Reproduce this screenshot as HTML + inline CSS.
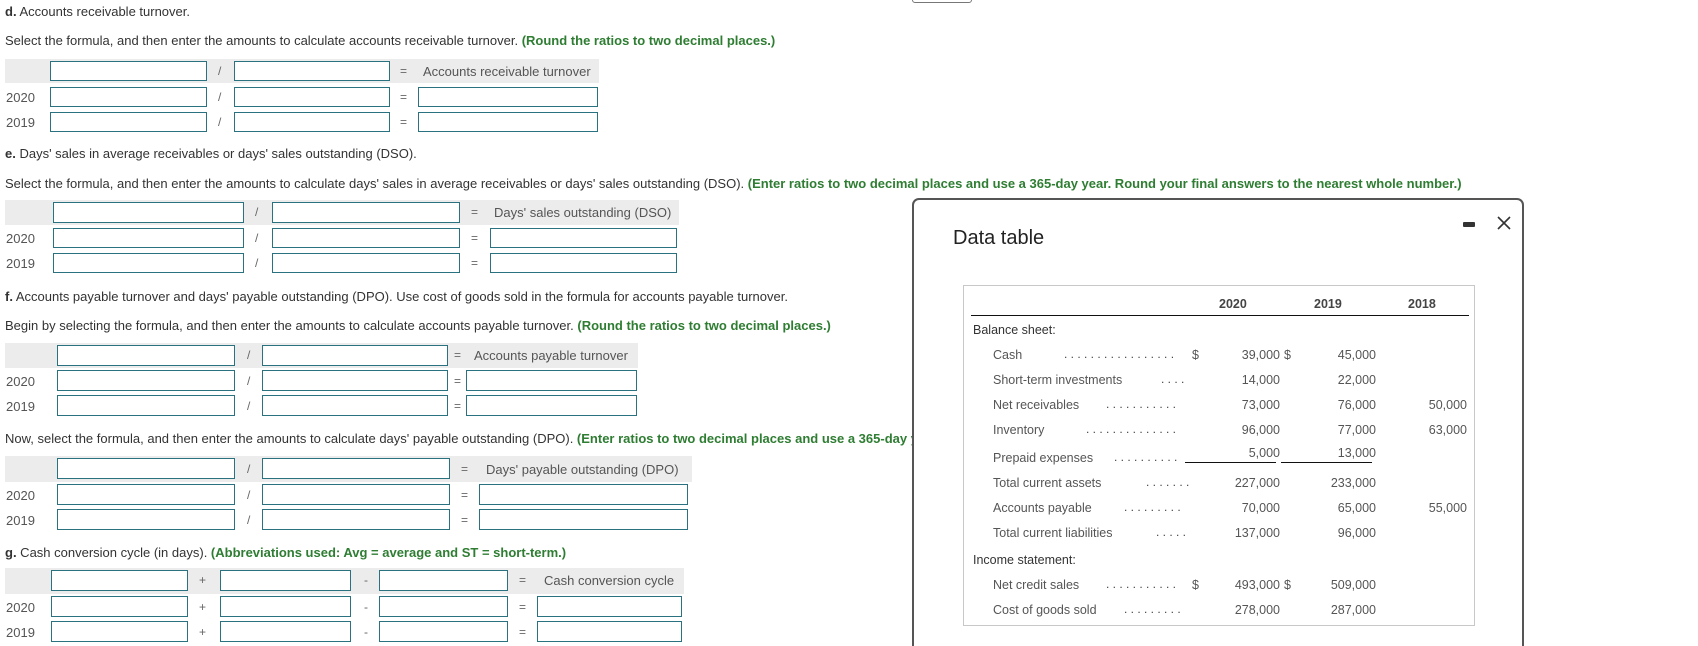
<!DOCTYPE html>
<html style="width:1698px;height:646px;overflow:hidden"><head><meta charset="utf-8"><style>
*{margin:0;padding:0;box-sizing:border-box}
body{width:1698px;height:646px;overflow:hidden;background:#fff;font-family:"Liberation Sans",Arial,sans-serif;font-size:13px;color:#333;position:relative}
.a{position:absolute;white-space:nowrap}
.g{color:#2e7d32;font-weight:bold}
.hd{position:absolute;background:#ececec}
.in{position:absolute;border:1px solid #2b7280;background:#fff}
.op{position:absolute;color:#666;font-size:12px}
.yr{position:absolute;color:#555;font-size:13px}
.lb{position:absolute;color:#555;font-size:13px;white-space:nowrap}
.dt{position:absolute;color:#444;font-size:12px}
.t{position:absolute;color:#555;font-size:12.5px;white-space:nowrap}
.r{text-align:right}
</style></head><body>
<div class="a" style="left:912px;top:-6px;width:60px;height:9px;border:1px solid #777;border-radius:3px"></div>

<div class="a" style="left:5px;top:4px"><b>d.</b> Accounts receivable turnover.</div>
<div class="a" style="left:5px;top:33px">Select the formula, and then enter the amounts to calculate accounts receivable turnover. <span class="g">(Round the ratios to two decimal places.)</span></div>
<div class="hd" style="left:5px;top:59px;width:594px;height:24px"></div>
<div class="in" style="left:50px;top:61px;width:157px;height:20px"></div><div class="op" style="left:218px;top:64px">/</div>
<div class="in" style="left:234px;top:61px;width:156px;height:20px"></div><div class="op" style="left:400px;top:64px">=</div>
<div class="lb" style="left:423px;top:64px">Accounts receivable turnover</div>
<div class="yr" style="left:6px;top:90px">2020</div>
<div class="in" style="left:50px;top:87px;width:157px;height:20px"></div><div class="op" style="left:218px;top:90px">/</div>
<div class="in" style="left:234px;top:87px;width:156px;height:20px"></div><div class="op" style="left:400px;top:90px">=</div>
<div class="in" style="left:418px;top:87px;width:180px;height:20px"></div>
<div class="yr" style="left:6px;top:115px">2019</div>
<div class="in" style="left:50px;top:112px;width:157px;height:20px"></div><div class="op" style="left:218px;top:115px">/</div>
<div class="in" style="left:234px;top:112px;width:156px;height:20px"></div><div class="op" style="left:400px;top:115px">=</div>
<div class="in" style="left:418px;top:112px;width:180px;height:20px"></div>

<div class="a" style="left:5px;top:146px"><b>e.</b> Days' sales in average receivables or days' sales outstanding (DSO).</div>
<div class="a" style="left:5px;top:176px">Select the formula, and then enter the amounts to calculate days' sales in average receivables or days' sales outstanding (DSO). <span class="g">(Enter ratios to two decimal places and use a 365-day year. Round your final answers to the nearest whole number.)</span></div>
<div class="hd" style="left:5px;top:200px;width:674px;height:25px"></div>
<div class="in" style="left:53px;top:202px;width:191px;height:21px"></div><div class="op" style="left:255px;top:205px">/</div>
<div class="in" style="left:272px;top:202px;width:188px;height:21px"></div><div class="op" style="left:471px;top:205px">=</div>
<div class="lb" style="left:494px;top:205px">Days' sales outstanding (DSO)</div>
<div class="yr" style="left:6px;top:231px">2020</div>
<div class="in" style="left:53px;top:228px;width:191px;height:20px"></div><div class="op" style="left:255px;top:231px">/</div>
<div class="in" style="left:272px;top:228px;width:188px;height:20px"></div><div class="op" style="left:471px;top:231px">=</div>
<div class="in" style="left:490px;top:228px;width:187px;height:20px"></div>
<div class="yr" style="left:6px;top:256px">2019</div>
<div class="in" style="left:53px;top:253px;width:191px;height:20px"></div><div class="op" style="left:255px;top:256px">/</div>
<div class="in" style="left:272px;top:253px;width:188px;height:20px"></div><div class="op" style="left:471px;top:256px">=</div>
<div class="in" style="left:490px;top:253px;width:187px;height:20px"></div>

<div class="a" style="left:5px;top:289px"><b>f.</b> Accounts payable turnover and days' payable outstanding (DPO). Use cost of goods sold in the formula for accounts payable turnover.</div>
<div class="a" style="left:5px;top:318px">Begin by selecting the formula, and then enter the amounts to calculate accounts payable turnover. <span class="g">(Round the ratios to two decimal places.)</span></div>
<div class="hd" style="left:5px;top:343px;width:633px;height:25px"></div>
<div class="in" style="left:57px;top:345px;width:178px;height:21px"></div><div class="op" style="left:247px;top:348px">/</div>
<div class="in" style="left:262px;top:345px;width:186px;height:21px"></div><div class="op" style="left:454px;top:348px">=</div>
<div class="lb" style="left:474px;top:348px">Accounts payable turnover</div>
<div class="yr" style="left:6px;top:374px">2020</div>
<div class="in" style="left:57px;top:370px;width:178px;height:21px"></div><div class="op" style="left:247px;top:374px">/</div>
<div class="in" style="left:262px;top:370px;width:186px;height:21px"></div><div class="op" style="left:454px;top:374px">=</div>
<div class="in" style="left:466px;top:370px;width:171px;height:21px"></div>
<div class="yr" style="left:6px;top:399px">2019</div>
<div class="in" style="left:57px;top:395px;width:178px;height:21px"></div><div class="op" style="left:247px;top:399px">/</div>
<div class="in" style="left:262px;top:395px;width:186px;height:21px"></div><div class="op" style="left:454px;top:399px">=</div>
<div class="in" style="left:466px;top:395px;width:171px;height:21px"></div>

<div class="a" style="left:5px;top:431px">Now, select the formula, and then enter the amounts to calculate days' payable outstanding (DPO). <span class="g">(Enter ratios to two decimal places and use a 365-day year. Round your final answers to the nearest whole number.)</span></div>
<div class="hd" style="left:5px;top:456px;width:687px;height:26px"></div>
<div class="in" style="left:57px;top:458px;width:178px;height:21px"></div><div class="op" style="left:247px;top:462px">/</div>
<div class="in" style="left:262px;top:458px;width:188px;height:21px"></div><div class="op" style="left:461px;top:462px">=</div>
<div class="lb" style="left:486px;top:462px">Days' payable outstanding (DPO)</div>
<div class="yr" style="left:6px;top:488px">2020</div>
<div class="in" style="left:57px;top:484px;width:178px;height:21px"></div><div class="op" style="left:247px;top:488px">/</div>
<div class="in" style="left:262px;top:484px;width:188px;height:21px"></div><div class="op" style="left:461px;top:488px">=</div>
<div class="in" style="left:479px;top:484px;width:209px;height:21px"></div>
<div class="yr" style="left:6px;top:513px">2019</div>
<div class="in" style="left:57px;top:509px;width:178px;height:21px"></div><div class="op" style="left:247px;top:513px">/</div>
<div class="in" style="left:262px;top:509px;width:188px;height:21px"></div><div class="op" style="left:461px;top:513px">=</div>
<div class="in" style="left:479px;top:509px;width:209px;height:21px"></div>

<div class="a" style="left:5px;top:545px"><b>g.</b> Cash conversion cycle (in days). <span class="g">(Abbreviations used: Avg = average and ST = short-term.)</span></div>
<div class="hd" style="left:5px;top:568px;width:679px;height:26px"></div>
<div class="in" style="left:51px;top:570px;width:137px;height:21px"></div><div class="op" style="left:199px;top:573px">+</div>
<div class="in" style="left:220px;top:570px;width:131px;height:21px"></div><div class="op" style="left:364px;top:573px">-</div>
<div class="in" style="left:379px;top:570px;width:129px;height:21px"></div><div class="op" style="left:519px;top:573px">=</div>
<div class="lb" style="left:544px;top:573px">Cash conversion cycle</div>
<div class="yr" style="left:6px;top:600px">2020</div>
<div class="in" style="left:51px;top:596px;width:137px;height:21px"></div><div class="op" style="left:199px;top:600px">+</div>
<div class="in" style="left:220px;top:596px;width:131px;height:21px"></div><div class="op" style="left:364px;top:600px">-</div>
<div class="in" style="left:379px;top:596px;width:129px;height:21px"></div><div class="op" style="left:519px;top:600px">=</div>
<div class="in" style="left:537px;top:596px;width:145px;height:21px"></div>
<div class="yr" style="left:6px;top:625px">2019</div>
<div class="in" style="left:51px;top:621px;width:137px;height:21px"></div><div class="op" style="left:199px;top:625px">+</div>
<div class="in" style="left:220px;top:621px;width:131px;height:21px"></div><div class="op" style="left:364px;top:625px">-</div>
<div class="in" style="left:379px;top:621px;width:129px;height:21px"></div><div class="op" style="left:519px;top:625px">=</div>
<div class="in" style="left:537px;top:621px;width:145px;height:21px"></div>

<!-- dialog -->
<div class="a" style="left:-4px;top:0;width:1698px;height:646px;overflow:hidden">
<div class="a" style="left:916px;top:198px;width:612px;height:448px;border:2px solid #555;border-bottom:none;border-radius:7px 7px 0 0;background:#fff"></div>
<div class="a" style="left:957px;top:227px;font-size:20px;color:#222">Data table</div>
<div class="a" style="left:1467px;top:222px;width:12px;height:5px;background:#333;border-radius:1px"></div>
<svg class="a" style="left:1500px;top:215px" width="16" height="16"><path d="M2 2L14 14M14 2L2 14" stroke="#333" stroke-width="1.6"/></svg>
<div class="a" style="left:967px;top:285px;width:512px;height:341px;border:1px solid #c8c8c8"></div>
<div class="a" style="left:975px;top:315px;width:498px;height:1px;background:#111"></div>
<div class="t" style="left:1223px;top:297px;font-weight:bold;color:#444">2020</div>
<div class="t" style="left:1318px;top:297px;font-weight:bold;color:#444">2019</div>
<div class="t" style="left:1412px;top:297px;font-weight:bold;color:#444">2018</div>
<div class="t" style="left:977px;top:323px;color:#333">Balance sheet:</div>
<div class="t" style="left:977px;top:553px;color:#333">Income statement:</div>

<div class="t" style="left:997px;top:348px">Cash</div><div class="dt" style="left:1068px;top:347px">. . . . . . . . . . . . . . . . .</div><div class="t" style="left:1196px;top:348px">$</div>
<div class="t r" style="left:1200px;top:348px;width:84px">39,000</div><div class="t" style="left:1288px;top:348px">$</div><div class="t r" style="left:1300px;top:348px;width:80px">45,000</div>

<div class="t" style="left:997px;top:373px">Short-term investments</div><div class="dt" style="left:1165px;top:372px">. . . .</div>
<div class="t r" style="left:1200px;top:373px;width:84px">14,000</div><div class="t r" style="left:1300px;top:373px;width:80px">22,000</div>

<div class="t" style="left:997px;top:398px">Net receivables</div><div class="dt" style="left:1110px;top:397px">. . . . . . . . . . .</div>
<div class="t r" style="left:1200px;top:398px;width:84px">73,000</div><div class="t r" style="left:1300px;top:398px;width:80px">76,000</div><div class="t r" style="left:1400px;top:398px;width:71px">50,000</div>

<div class="t" style="left:997px;top:423px">Inventory</div><div class="dt" style="left:1090px;top:422px">. . . . . . . . . . . . . .</div>
<div class="t r" style="left:1200px;top:423px;width:84px">96,000</div><div class="t r" style="left:1300px;top:423px;width:80px">77,000</div><div class="t r" style="left:1400px;top:423px;width:71px">63,000</div>

<div class="t" style="left:997px;top:451px">Prepaid expenses</div><div class="dt" style="left:1118px;top:450px">. . . . . . . . . .</div>
<div class="t r" style="left:1200px;top:446px;width:84px">5,000</div><div class="t r" style="left:1300px;top:446px;width:80px">13,000</div>
<div class="a" style="left:1189px;top:462px;width:91px;height:1px;background:#111"></div>
<div class="a" style="left:1285px;top:462px;width:91px;height:1px;background:#111"></div>

<div class="t" style="left:997px;top:476px">Total current assets</div><div class="dt" style="left:1150px;top:475px">. . . . . . .</div>
<div class="t r" style="left:1200px;top:476px;width:84px">227,000</div><div class="t r" style="left:1300px;top:476px;width:80px">233,000</div>

<div class="t" style="left:997px;top:501px">Accounts payable</div><div class="dt" style="left:1128px;top:500px">. . . . . . . . .</div>
<div class="t r" style="left:1200px;top:501px;width:84px">70,000</div><div class="t r" style="left:1300px;top:501px;width:80px">65,000</div><div class="t r" style="left:1400px;top:501px;width:71px">55,000</div>

<div class="t" style="left:997px;top:526px">Total current liabilities</div><div class="dt" style="left:1160px;top:525px">. . . . .</div>
<div class="t r" style="left:1200px;top:526px;width:84px">137,000</div><div class="t r" style="left:1300px;top:526px;width:80px">96,000</div>

<div class="t" style="left:997px;top:578px">Net credit sales</div><div class="dt" style="left:1110px;top:577px">. . . . . . . . . . .</div><div class="t" style="left:1196px;top:578px">$</div>
<div class="t r" style="left:1200px;top:578px;width:84px">493,000</div><div class="t" style="left:1288px;top:578px">$</div><div class="t r" style="left:1300px;top:578px;width:80px">509,000</div>

<div class="t" style="left:997px;top:603px">Cost of goods sold</div><div class="dt" style="left:1128px;top:602px">. . . . . . . . .</div>
<div class="t r" style="left:1200px;top:603px;width:84px">278,000</div><div class="t r" style="left:1300px;top:603px;width:80px">287,000</div>
</div>
</body></html>
